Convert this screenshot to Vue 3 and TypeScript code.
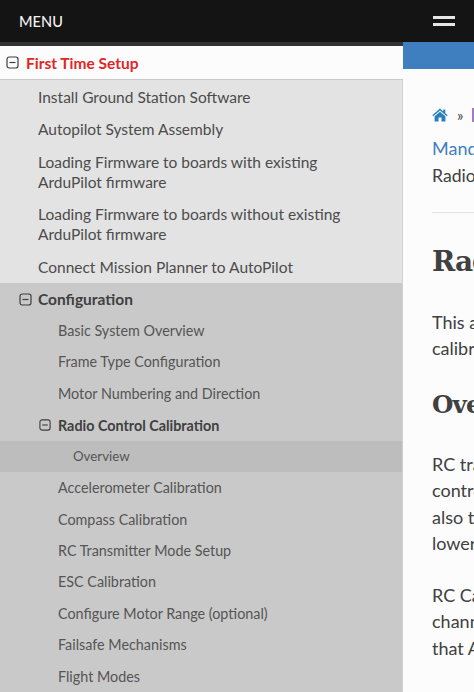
<script setup lang="ts">
const level1a: string[][] = [
  ['Install Ground Station Software'],
  ['Autopilot System Assembly'],
  ['Loading Firmware to boards with existing', 'ArduPilot firmware'],
  ['Loading Firmware to boards without existing', 'ArduPilot firmware'],
  ['Connect Mission Planner to AutoPilot'],
]
const beforeRadio = ['Basic System Overview', 'Frame Type Configuration', 'Motor Numbering and Direction']
const afterRadio = [
  'Accelerometer Calibration',
  'Compass Calibration',
  'RC Transmitter Mode Setup',
  'ESC Calibration',
  'Configure Motor Range (optional)',
  'Failsafe Mechanisms',
  'Flight Modes',
]
</script>

<template>
  <div class="page">
    <header class="topbar">
      <span class="menu">MENU</span>
      <span class="burger"><i></i><i></i></span>
    </header>
    <div class="body">
      <nav class="side">
        <div class="root">
          <svg class="box" viewBox="0 0 13 13"><rect x="1" y="1" width="11" height="11" rx="2.2" /><path d="M3.5 6.5h6" /></svg>
          <span>First Time Setup</span>
        </div>
        <div class="l1group">
          <div v-for="item in level1a" :key="item[0]" class="l1">
            <div v-for="line in item" :key="line">{{ line }}</div>
          </div>
        </div>
        <div class="l2group">
          <div class="cfg">
            <svg class="box" viewBox="0 0 13 13"><rect x="1" y="1" width="11" height="11" rx="2.2" /><path d="M3.5 6.5h6" /></svg>
            <span>Configuration</span>
          </div>
          <div v-for="t in beforeRadio" :key="t" class="l2">{{ t }}</div>
          <div class="radio">
            <svg class="box small" viewBox="0 0 13 13"><rect x="1" y="1" width="11" height="11" rx="2.2" /><path d="M3.5 6.5h6" /></svg>
            <span>Radio Control Calibration</span>
          </div>
          <div class="l3">Overview</div>
          <div v-for="t in afterRadio" :key="t" class="l2">{{ t }}</div>
        </div>
      </nav>
      <main class="content">
        <div class="bluebar"></div>
        <div class="inner">
          <div class="crumbs">
            <svg class="home" viewBox="0 0 16 14"><path d="M8 0.6 0.3 7.2l.9 1L8 2.5l6.8 5.7.9-1L13.3 5.2V1.4h-2v2.1L8 .6Z" /><path d="M8 3.7 2.6 8.2V13.6h3.9V9.6h3v4h3.9V8.2L8 3.7Z" /></svg>
            <span class="sep">»</span>
            <span class="tag"></span>
          </div>
          <div class="link">Mandatory Hardware Configuration</div>
          <div class="crumbtext">Radio Control Calibration</div>
          <hr class="rule" />
          <h1>Radio Control Calibration</h1>
          <p class="p1">This article shows how to perform basic<br />calibration using the Mission Planner</p>
          <h2>Overview</h2>
          <p class="p2">RC transmitters allow the pilot to set the<br />control of the vehicle. It is important<br />also to calibrate the transmitter to set the<br />lower and upper limits</p>
          <p class="p3">RC Calibration involves capturing each<br />channel's minimum, maximum and trim<br />that ArduPilot can use them</p>
        </div>
      </main>
    </div>
  </div>
</template>

<style>
html, body { margin: 0; overflow: hidden; background: #fcfcfc; }
</style>

<style scoped>
.page {
  width: 474px;
  height: 692px;
  overflow: hidden;
  font-family: Lato, "Open Sans", sans-serif;
  font-size: 16px;
  color: #404040;
  background: #fcfcfc;
  display: flex;
  flex-direction: column;
}
.topbar {
  flex: 0 0 42px;
  background: #141414;
  display: flex;
  align-items: center;
  justify-content: space-between;
  padding: 0 19px;
  box-sizing: border-box;
}
.menu { color: #f2f2f2; font-size: 14.5px; font-weight: 500; letter-spacing: 0.1px; }
.burger { display: flex; flex-direction: column; gap: 4px; margin-top: -1px; }
.burger i { display: block; width: 22px; height: 3px; background: #e6e6e6; }
.body { flex: 1; display: flex; min-height: 0; }
.side {
  flex: 0 0 403px;
  width: 403px;
  border-top: 4px solid #333;
  box-sizing: border-box;
  overflow: hidden;
  display: flex;
  flex-direction: column;
}
.box { width: 13px; height: 13px; flex: none; }
.box.small { width: 12px; height: 12px; }
.box rect { fill: none; stroke: #3d3d3d; stroke-width: 1.2; }
.box path { stroke: #3d3d3d; stroke-width: 1.2; fill: none; }
.root {
  flex: none;
  height: 33px;
  background: #fcfcfc;
  border-bottom: 1px solid #c9c9c9;
  display: flex;
  align-items: center;
  gap: 7px;
  padding-left: 6px;
  color: #e02626;
  font-weight: 700;
  font-size: 15.5px;
}
.l1group { flex: none; background: #e3e3e3; border-right: 1px solid #d0d0d0; }
.l1 {
  padding: 6.25px 0 6.25px 38px;
  line-height: 20px;
  font-size: 15.5px;
  color: #4c4c4c;
}
.l1:first-child { padding-top: 6.75px; }
.l2group { flex: 1; background: #c9c9c9; border-right: 1px solid #d0d0d0; }
.cfg {
  height: 32px;
  display: flex;
  align-items: center;
  gap: 6px;
  padding-left: 19px;
  font-weight: 700;
  font-size: 15.5px;
  color: #404040;
}
.l2 {
  height: 31.4px;
  line-height: 31.4px;
  padding-left: 58px;
  font-size: 14.35px;
  color: #555;
}
.radio {
  height: 32px;
  display: flex;
  align-items: center;
  gap: 7px;
  padding-left: 39px;
  font-weight: 700;
  font-size: 14.35px;
  color: #404040;
}
.l3 {
  height: 31px;
  line-height: 31px;
  padding-left: 73px;
  background: #bdbdbd;
  font-size: 13.3px;
  color: #555;
}
.content { flex: 1; min-width: 0; overflow: hidden; }
.bluebar { height: 27px; background: #3f7fbf; }
.inner { padding: 38px 0 0 29px; width: 420px; white-space: nowrap; }
.crumbs { display: flex; align-items: center; height: 16px; gap: 9px; }
.home { width: 16px; height: 14px; fill: #2980b9; flex: none; }
.sep { font-size: 15px; }
.tag { width: 14px; height: 14px; background: #a678c8; }
.link { color: #3f7fbf; font-size: 18px; line-height: 27px; margin-top: 12px; }
.crumbtext { font-size: 17.6px; line-height: 27px; }
.rule { border: 0; border-top: 1px solid #e1e4e5; margin: 23px 0 0; }
h1 {
  font-family: "DejaVu Serif", serif;
  font-size: 28px;
  font-weight: 700;
  line-height: 36px;
  margin: 31px 0 0;
  letter-spacing: -1px;
}
h2 {
  font-family: "DejaVu Serif", serif;
  font-size: 24.5px;
  font-weight: 700;
  line-height: 32px;
  margin: 27px 0 0;
  letter-spacing: -0.8px;
}
p { margin: 0; font-size: 18px; line-height: 26.4px; color: #404040; }
.p1 { margin-top: 29px; }
.p2 { margin-top: 30px; }
.p3 { margin-top: 25.4px; }
</style>
